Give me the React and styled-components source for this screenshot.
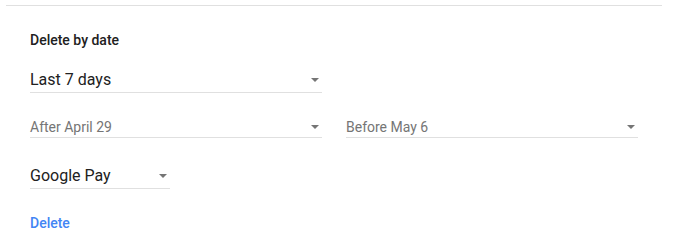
import React from "react";
import styled, { createGlobalStyle } from "styled-components";

const GlobalStyle = createGlobalStyle`
  body {
    margin: 0;
    background: #fff;
    font-family: Roboto, "Liberation Sans", Arial, sans-serif;
  }
`;

const Panel = styled.section`
  margin: 5px 17px 0 6px;
  border-top: 1px solid #e0e0e0;
  padding: 26px 24px 0;
  display: flex;
  flex-direction: column;
  align-items: flex-start;
`;

const Title = styled.div`
  font-size: 14px;
  line-height: 16px;
  font-weight: 500;
  color: #212121;
`;

const Row = styled.div`
  display: flex;
  gap: 24px;
  margin-top: ${(p) => p.$top}px;
`;

const Select = styled.div`
  box-sizing: border-box;
  width: ${(p) => p.$width}px;
  display: flex;
  align-items: center;
  justify-content: space-between;
  border-bottom: 1px solid #e0e0e0;
  padding-bottom: ${(p) => (p.$muted ? 1 : 2)}px;
  font-size: ${(p) => (p.$muted ? 14 : 16)}px;
  line-height: ${(p) => (p.$muted ? 18 : 20)}px;
  color: ${(p) => (p.$muted ? "#757575" : "#212121")};
  cursor: pointer;
`;

const Arrow = styled.span`
  width: 0;
  height: 0;
  margin-right: 3px;
  border-left: 4px solid transparent;
  border-right: 4px solid transparent;
  border-top: 4px solid #757575;
`;

const DeleteButton = styled.button`
  margin-top: 26px;
  padding: 0;
  border: 0;
  background: none;
  font-family: inherit;
  font-size: 14px;
  line-height: 16px;
  font-weight: 500;
  color: #4285f4;
  cursor: pointer;
`;

function Dropdown({ label, width, muted }) {
  return (
    <Select $width={width} $muted={muted}>
      <span>{label}</span>
      <Arrow />
    </Select>
  );
}

export default function App() {
  return (
    <>
      <GlobalStyle />
      <Panel>
        <Title>Delete by date</Title>
        <Row $top={22}>
          <Dropdown label="Last 7 days" width={292} />
        </Row>
        <Row $top={25}>
          <Dropdown label="After April 29" width={292} muted />
          <Dropdown label="Before May 6" width={292} muted />
        </Row>
        <Row $top={28}>
          <Dropdown label="Google Pay" width={140} />
        </Row>
        <DeleteButton>Delete</DeleteButton>
      </Panel>
    </>
  );
}
